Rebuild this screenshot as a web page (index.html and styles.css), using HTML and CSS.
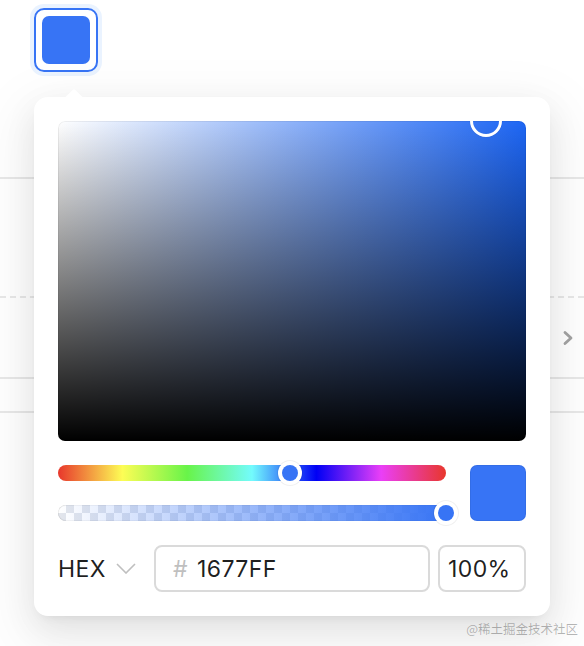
FILE: index.html
```html
<!DOCTYPE html>
<html lang="zh-CN">
<head>
    <meta charset="UTF-8">
    <meta name="viewport" content="width=device-width, initial-scale=1.0">
    <title>ColorPicker</title>
    <link rel="stylesheet" href="styles.css">
</head>
<body>
    <div class="page">
        <div class="trigger">
            <div class="trigger-color"></div>
        </div>

        <!-- 被弹层盖住的列表 -->
        <div class="list">
            <div class="list-row row-a"></div>
            <div class="list-row row-b"></div>
            <div class="list-row row-c">
                <svg class="row-arrow" width="12" height="16" viewBox="0 0 12 16">
                    <polyline points="3,2.5 9,8 3,13.5" fill="none" stroke="#a3a3a3" stroke-width="2.8" stroke-linecap="round" stroke-linejoin="round"/>
                </svg>
            </div>
            <div class="list-row row-d"></div>
        </div>

        <div class="popover">
            <div class="popover-arrow"></div>
            <div class="picker">
                <div class="saturation">
                    <div class="saturation-handle"></div>
                </div>
                <div class="slider-row">
                    <div class="sliders">
                        <div class="slider hue">
                            <div class="thumb hue-thumb"><span class="thumb-dot"></span></div>
                        </div>
                        <div class="slider alpha">
                            <div class="alpha-fill"></div>
                            <div class="thumb alpha-thumb"><span class="thumb-dot"></span></div>
                        </div>
                    </div>
                    <div class="preview"></div>
                </div>
                <div class="input-row">
                    <div class="format-select">
                        <span>HEX</span>
                        <svg width="20" height="11" viewBox="0 0 20 11">
                            <polyline points="1,1 10,10 19,1" fill="none" stroke="#bfbfbf" stroke-width="1.6"/>
                        </svg>
                    </div>
                    <div class="hex-input">
                        <span class="hex-prefix">#</span>
                        <span class="hex-value">1677FF</span>
                    </div>
                    <div class="alpha-input">100%</div>
                </div>
            </div>
        </div>

        <div class="watermark">@稀土掘金技术社区</div>
    </div>
</body>
</html>
```

FILE: styles.css
```css
body {
    font-family: Inter, "Noto Sans", Arial, sans-serif;
    margin: 0;
    padding: 0;
    background-color: #fff;
    color: rgba(0,0,0,0.88);
}
.page {
    position: relative;
    width: 584px;
    height: 646px;
    overflow: hidden;
}
.trigger {
    width: 48px;
    height: 48px;
    margin: 8px 0 0 34px;
    padding: 6px;
    border: 2px solid #3774f5;
    border-radius: 10px;
    box-shadow: 0 0 0 4px #eaf3ff;
}
.trigger-color {
    width: 48px;
    height: 48px;
    border-radius: 7px;
    background-color: #3774f5;
}
.list-row {
    border-bottom: 2px solid #e8e8e8;
}
.row-a {
    height: 105px;
}
.row-b {
    height: 117px;
    border-bottom-style: dashed;
}
.row-c {
    height: 79px;
    display: flex;
    align-items: center;
    justify-content: flex-end;
    padding-right: 10px;
}
.row-d {
    height: 32px;
}
.popover {
    position: absolute;
    top: 97px;
    left: 34px;
    width: 516px;
    padding: 24px;
    box-sizing: border-box;
    background-color: #fff;
    border-radius: 14px;
    box-shadow: 0 12px 32px rgba(0,0,0,0.08), 0 6px 12px -8px rgba(0,0,0,0.12), 0 18px 56px 16px rgba(0,0,0,0.05);
}
.popover-arrow {
    position: absolute;
    top: -6px;
    left: 34px;
    width: 12px;
    height: 12px;
    background-color: #fff;
    transform: rotate(45deg);
    border-radius: 2px 0 0 0;
}
.picker {
    display: flex;
    flex-direction: column;
    gap: 24px;
}
.saturation {
    position: relative;
    height: 320px;
    border-radius: 7px;
    overflow: hidden;
    background: linear-gradient(to top, #000, rgba(0,0,0,0)), linear-gradient(to right, #fff, #1d66f5);
    box-shadow: inset 0 0 0 1px rgba(0,0,0,0.06);
}
.saturation-handle {
    position: absolute;
    left: 412px;
    top: -16px;
    width: 26px;
    height: 26px;
    border: 3px solid #fff;
    border-radius: 50%;
    box-shadow: 0 0 1px rgba(0,0,0,0.2);
}
.slider-row {
    display: flex;
    gap: 24px;
}
.sliders {
    flex: 1;
    display: flex;
    flex-direction: column;
    gap: 24px;
}
.slider {
    position: relative;
    height: 16px;
    border-radius: 8px;
}
.hue {
    background: linear-gradient(to right, #e8372c 0%, #fdfd55 16.6%, #68f449 33.3%, #73fbfd 50%, #0000f5 66.6%, #ea3ff7 83.3%, #e8372c 100%);
}
.alpha {
    background-color: #fff;
    background-image: conic-gradient(#e3e6ec 25%, transparent 0 50%, #e3e6ec 0 75%, transparent 0);
    background-size: 16px 16px;
    box-shadow: inset 0 0 1px rgba(0,0,0,0.25);
}
.alpha-fill {
    height: 100%;
    border-radius: 8px;
    background: linear-gradient(to right, rgba(55,116,245,0), #3774f5);
    box-shadow: inset 0 0 1px rgba(0,0,0,0.2);
}
.thumb {
    position: absolute;
    top: -4px;
    width: 24px;
    height: 24px;
    box-sizing: border-box;
    border-radius: 50%;
    background-color: #fff;
    box-shadow: 0 0 0 1px rgba(0,0,0,0.06);
    display: flex;
    align-items: center;
    justify-content: center;
}
.hue-thumb {
    left: 220px;
}
.alpha-thumb {
    left: 376px;
}
.thumb-dot {
    width: 16px;
    height: 16px;
    border-radius: 50%;
    background-color: #3774f5;
}
.preview {
    width: 56px;
    height: 56px;
    border-radius: 7px;
    background-color: #3774f5;
    box-shadow: inset 0 0 0 1px rgba(0,0,0,0.06);
}
.input-row {
    display: flex;
    align-items: center;
    height: 47px;
    font-size: 23px;
    letter-spacing: 0.4px;
}
.format-select {
    width: 96px;
    display: flex;
    align-items: center;
    gap: 10px;
}
.hex-input {
    width: 276px;
    height: 47px;
    box-sizing: border-box;
    border: 2px solid #dadada;
    border-radius: 8px;
    display: flex;
    align-items: center;
    padding-left: 17px;
    gap: 9px;
}
.hex-prefix {
    color: #bfbfbf;
}
.alpha-input {
    width: 88px;
    height: 47px;
    margin-left: 8px;
    box-sizing: border-box;
    border: 2px solid #dadada;
    border-radius: 8px;
    display: flex;
    align-items: center;
    padding-left: 8px;
}
.watermark {
    position: absolute;
    right: 6px;
    bottom: 8px;
    font-family: "Noto Sans CJK SC", sans-serif;
    font-size: 12.5px;
    color: rgba(0,0,0,0.28);
}
```
